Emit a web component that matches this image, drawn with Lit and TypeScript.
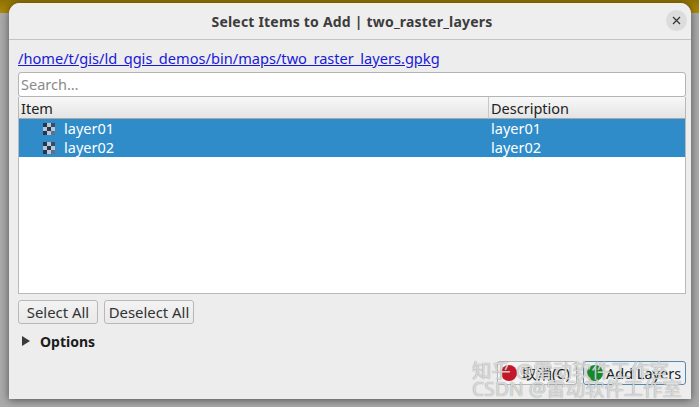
import { LitElement, html, css } from "lit";
import { customElement } from "lit/decorators.js";

const icon = html`<svg class="ico" width="14" height="14" viewBox="0 0 14 14" shape-rendering="crispEdges">
  <rect x="1" y="1" width="12" height="12" fill="#b9c6d3"/>
  <rect x="1" y="1" width="4" height="4" fill="#243650"/>
  <rect x="9" y="1" width="4" height="4" fill="#3a4c64"/>
  <rect x="5" y="5" width="4" height="4" fill="#243650"/>
  <rect x="1" y="9" width="4" height="4" fill="#243650"/>
  <rect x="9" y="9" width="4" height="4" fill="#5d7084"/>
</svg>`;

@customElement("app-root")
export class AppRoot extends LitElement {
  static styles = css`
    :host {
      display: block;
      position: relative;
      width: 699px;
      height: 407px;
      overflow: hidden;
      background: #aaaaaa;
      font-family: "Noto Sans", "Open Sans", sans-serif;
      font-size: 14.5px;
      color: #2c2c2c;
    }
    .topbar { height: 13px; background: linear-gradient(#8f7204, #ad8a0a); margin-bottom: -10px; }
    .dialog {
      margin: 0 8px 0 9px;
      height: 396px;
      box-sizing: border-box;
      background: #ededed;
      border-radius: 11px 11px 0 0;
      box-shadow: 0 1px 9px rgba(0,0,0,.55);
      display: flex;
      flex-direction: column;
      position: relative;
    }
    .head {
      height: 36px;
      border-bottom: 1px solid #c4c4c4;
      border-radius: 11px 11px 0 0;
      background: #eeeeee;
      display: flex;
      align-items: center;
      justify-content: center;
      padding-left: 4px;
      position: relative;
      font-weight: 700;
      font-size: 14px;
      letter-spacing: .2px;
      color: #3c3c3c;
      flex: none;
    }
    .close {
      position: absolute;
      right: 4px;
      top: 7px;
      width: 21px;
      height: 21px;
      border-radius: 50%;
      background: #dcdcdc;
      display: flex;
      align-items: center;
      justify-content: center;
    }
    .body {
      flex: 1;
      padding: 8px 5px 0 9px;
      display: flex;
      flex-direction: column;
      min-height: 0;
    }
    .link {
      color: #1a1ad6;
      text-decoration: underline;
      height: 24px;
      line-height: 21px;
      font-size: 14.6px;
      white-space: nowrap;
    }
    .search {
      height: 25px;
      box-sizing: border-box;
      border: 1px solid #b4b4b4;
      border-radius: 3px;
      background: #fff;
      color: #8a8a8a;
      padding-left: 2px;
      line-height: 23px;
      flex: none;
    }
    .tree {
      height: 197px;
      box-sizing: border-box;
      border: 1px solid #b9b9b9;
      border-top: none;
      background: #fff;
      flex: none;
    }
    .cols { display: grid; grid-template-columns: 469px 1fr; }
    .th {
      height: 22px;
      box-sizing: border-box;
      background: linear-gradient(#f8f8f8, #e4e4e4);
      border-bottom: 1px solid #a8a8a8;
      line-height: 23px;
      padding-left: 2px;
      color: #222;
    }
    .th + .th { border-left: 1px solid #c8c8c8; padding-left: 2px; }
    .row {
      height: 19px;
      background: #2f8cc9;
      color: #fff;
      line-height: 19px;
    }
    .first { display: flex; align-items: center; padding-left: 23px; gap: 8px; }
    .desc { padding-left: 3px; }
    .ico { flex: none; }
    .sel { display: flex; gap: 6px; margin-top: 6px; flex: none; font-size: 14.9px; }
    .btn {
      height: 24px;
      box-sizing: border-box;
      border: 1px solid #b8b8b8;
      border-radius: 3px;
      background: linear-gradient(#f3f3f3, #e9e9e9);
      display: flex;
      align-items: center;
      justify-content: center;
      color: #333;
    }
    .b1 { width: 80px; }
    .b2 { width: 90px; }
    .opts {
      display: flex;
      align-items: center;
      gap: 10px;
      margin-top: 7px;
      height: 20px;
      padding-left: 4px;
      font-weight: 700;
      font-size: 14px;
      color: #1c1c1c;
      flex: none;
    }
    .tri {
      width: 0; height: 0;
      border-left: 8px solid #3a3a3a;
      border-top: 5px solid transparent;
      border-bottom: 5px solid transparent;
    }
    .foot { display: flex; justify-content: flex-end; gap: 6px; margin-top: 10px; flex: none; }
    .cancel { width: 80px; background: #f4f4f4; gap: 5px; justify-content: flex-start; padding-left: 3px; color: #222; }
    .add { width: 103px; border-color: #5c88a8; background: #eef1f3; gap: 3px; justify-content: flex-start; padding-left: 3px; color: #222; }
    .dot { width: 16px; height: 16px; border-radius: 50%; flex: none; }
    .red { background: #c5172b; }
    .green { background: #148a2e; }
    .wm {
      position: absolute;
      left: 472px;
      top: 362px;
      width: 225px;
      color: rgba(240,240,240,.8);
      font-family: "Noto Sans", "Noto Sans CJK SC", sans-serif;
      font-size: 19.4px;
      line-height: 18px;
      white-space: nowrap;
      text-shadow: 0 0 1px rgba(80,80,80,.75);
      pointer-events: none;
    }
    .wm2 { display: block; }
  `;

  render() {
    return html`
      <div class="topbar"></div>
      <div class="dialog">
        <div class="head">
          Select Items to Add | two_raster_layers
          <div class="close">
            <svg width="9" height="9" viewBox="0 0 9 9"><path d="M1 1L8 8M8 1L1 8" stroke="#333" stroke-width="1.2" fill="none"/></svg>
          </div>
        </div>
        <div class="body">
          <div class="link">/home/t/gis/ld_qgis_demos/bin/maps/two_raster_layers.gpkg</div>
          <div class="search">Search…</div>
          <div class="tree">
            <div class="cols">
              <div class="th">Item</div>
              <div class="th">Description</div>
            </div>
            ${["layer01", "layer02"].map(
              (n) => html`<div class="cols row">
                <div class="first">${icon}<span>${n}</span></div>
                <div class="desc">${n}</div>
              </div>`
            )}
          </div>
          <div class="sel">
            <div class="btn b1">Select All</div>
            <div class="btn b2">Deselect All</div>
          </div>
          <div class="opts"><span class="tri"></span>Options</div>
          <div class="foot">
            <div class="btn cancel"><span class="dot red"></span>取消(C)</div>
            <div class="btn add"><span class="dot green"></span>Add Layers</div>
          </div>
        </div>
      </div>
      <div class="wm">知乎 @雷动软件工作室<span class="wm2">CSDN @雷动软件工作室</span></div>
    `;
  }
}
